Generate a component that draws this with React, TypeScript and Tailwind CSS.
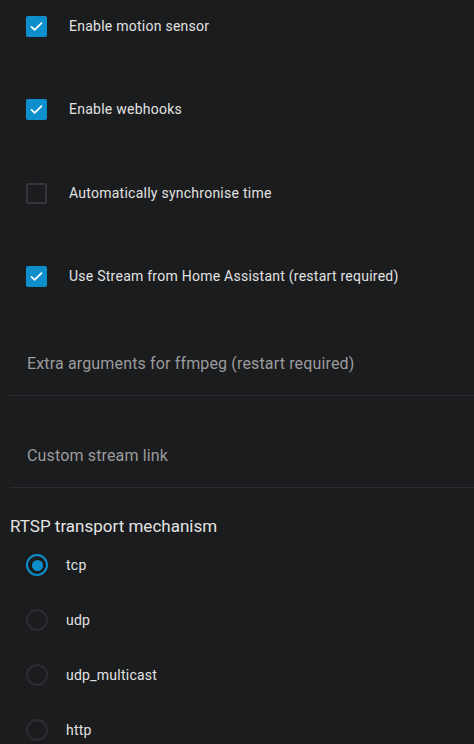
import React from 'react';

const CHECKS = [
  { label: 'Enable motion sensor', checked: true },
  { label: 'Enable webhooks', checked: true },
  { label: 'Automatically synchronise time', checked: false },
  { label: 'Use Stream from Home Assistant (restart required)', checked: true },
];

const FIELDS = ['Extra arguments for ffmpeg (restart required)', 'Custom stream link'];

const TRANSPORTS = ['tcp', 'udp', 'udp_multicast', 'http'];

function Checkbox({ checked }: { checked: boolean }) {
  if (!checked) {
    return <div className="w-[21px] h-[21px] rounded-[2px] border-2 border-[#35363a]" />;
  }
  return (
    <div className="w-[21px] h-[21px] rounded-[2px] bg-[#0c8fcb] flex items-center justify-center">
      <svg width="15" height="15" viewBox="0 0 24 24" fill="none">
        <path d="M4 12.5l5 5L20 6.5" stroke="#ffffff" strokeWidth="2.8" strokeLinecap="round" strokeLinejoin="round" />
      </svg>
    </div>
  );
}

function Radio({ checked }: { checked: boolean }) {
  return (
    <div
      className={`w-[22px] h-[22px] rounded-full flex items-center justify-center ${
        checked ? 'border-[2.5px] border-[#0c8fcb]' : 'border-2 border-[#2c2d30]'
      }`}
    >
      {checked && <div className="w-[11px] h-[11px] rounded-full bg-[#0c8fcb]" />}
    </div>
  );
}

export default function App() {
  return (
    <div
      className="w-[474px] h-[744px] overflow-hidden bg-[#1b1c1e] text-[#e2e2e2] pt-[1px]"
      style={{ fontFamily: 'Roboto, "Noto Sans", sans-serif' }}
    >
      {/* Checkboxes */}
      <div className="flex flex-col gap-[33.5px]">
        {CHECKS.map((c) => (
          <div key={c.label} className="h-[50px] flex items-center pl-[26px]">
            <Checkbox checked={c.checked} />
            <span className="ml-[22px] text-[14px] tracking-[0.25px]">{c.label}</span>
          </div>
        ))}
      </div>

      {/* Text fields */}
      <div className="mt-[31px] flex flex-col gap-[29px] pl-[10px]">
        {FIELDS.map((f) => (
          <div key={f} className="h-[63px] flex items-center pl-[17px] border-b border-[#2b2c2f]">
            <span className="text-[16px] tracking-[0.15px] text-[#9b9b9d] pt-[1px]">{f}</span>
          </div>
        ))}
      </div>

      {/* RTSP */}
      <div className="mt-[26px] pl-[10px] text-[17px] leading-[24px] text-[#e4e4e4]">
        RTSP transport mechanism
      </div>
      <div className="flex flex-col">
        {TRANSPORTS.map((t, i) => (
          <div key={t} className="h-[55px] flex items-center pl-[26px]">
            <Radio checked={i === 0} />
            <span className="ml-[18px] text-[14px] tracking-[0.25px]">{t}</span>
          </div>
        ))}
      </div>
    </div>
  );
}
